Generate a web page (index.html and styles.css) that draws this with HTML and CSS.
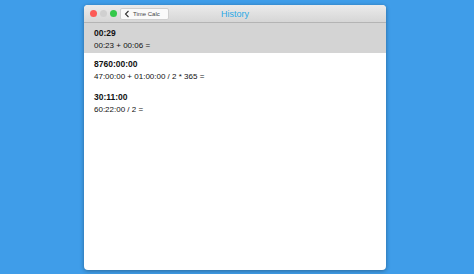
FILE: index.html
```html
<!DOCTYPE html>
<html lang="en">
<head>
  <meta charset="UTF-8" />
  <title>History</title>
  <link rel="stylesheet" href="styles.css">
</head>
<body>
  <div class="window">
    <div class="titlebar">
      <div class="lights">
        <span class="light red"></span>
        <span class="light off"></span>
        <span class="light green"></span>
      </div>
      <div class="back-btn">
        <svg width="6" height="8" viewBox="0 0 6 8"><path d="M4.5 1 L1.5 4 L4.5 7" fill="none" stroke="#333" stroke-width="1.1"/></svg>
        <span>Time Calc</span>
      </div>
      <div class="title">History</div>
    </div>
    <ul class="history">
      <li class="entry selected">
        <div class="result">00:29</div>
        <div class="expr">00:23 + 00:06 =</div>
      </li>
      <li class="entry">
        <div class="result">8760:00:00</div>
        <div class="expr">47:00:00 + 01:00:00 / 2 * 365 =</div>
      </li>
      <li class="entry">
        <div class="result">30:11:00</div>
        <div class="expr">60:22:00 / 2 =</div>
      </li>
    </ul>
  </div>
</body>
</html>
```

FILE: styles.css
```css
body {
  margin: 0;
  width: 474px;
  height: 274px;
  background: #3f9de9;
  font-family: "Liberation Sans", Arial, sans-serif;
  overflow: hidden;
}
.window {
  margin: 5px 0 0 84px;
  width: 302px;
  height: 265px;
  background: #fff;
  border-radius: 4px;
  box-shadow: 0 1px 4px rgba(0,0,0,0.35);
  overflow: hidden;
  display: flex;
  flex-direction: column;
}
.titlebar {
  height: 17px;
  background: linear-gradient(#ebebeb, #d6d6d6);
  border-bottom: 1px solid #b4b4b4;
  display: flex;
  align-items: center;
  position: relative;
}
.lights {
  display: flex;
  gap: 3px;
  margin-left: 6px;
}
.light {
  width: 7px;
  height: 7px;
  border-radius: 50%;
}
.red { background: #fc5b57; }
.off { background: #d0d0d0; }
.green { background: #34c84a; }
.back-btn {
  margin-left: 3px;
  height: 10px;
  width: 44px;
  background: #fafafa;
  border: 1px solid #cfcfcf;
  border-radius: 2px;
  display: flex;
  align-items: center;
  gap: 3px;
  padding-left: 3px;
  box-sizing: content-box;
  font-size: 6px;
  color: #444;
}
.title {
  position: absolute;
  left: 0;
  right: 0;
  text-align: center;
  font-size: 9px;
  color: #2aa9e6;
  pointer-events: none;
}
.history {
  list-style: none;
  margin: 0;
  padding: 0;
}
.entry {
  box-sizing: border-box;
  padding: 6px 10px 0;
  height: 33px;
  font-size: 8px;
  color: #111;
}
.entry.selected {
  background: #d4d4d4;
  height: 30px;
  padding-top: 5px;
}
.result {
  font-weight: bold;
  margin-bottom: 3px;
  font-size: 8.5px;
}
```
